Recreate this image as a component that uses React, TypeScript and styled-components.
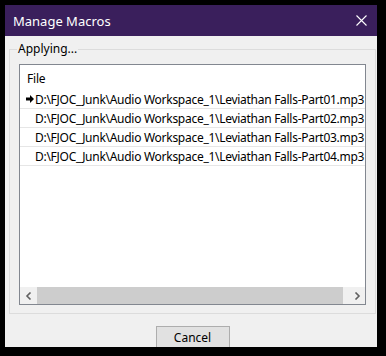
import React from "react";
import styled, { createGlobalStyle } from "styled-components";

const GlobalStyle = createGlobalStyle`
  html, body {
    margin: 0;
    padding: 0;
    background: #000000;
  }
  body {
    font-family: "Noto Sans", "DejaVu Sans", sans-serif;
    font-size: 12px;
  }
`;

const Screen = styled.div`
  width: 386px;
  height: 356px;
  padding: 5px 9px 9px 5px;
  box-sizing: border-box;
  overflow: hidden;
`;

const Dialog = styled.div`
  display: flex;
  flex-direction: column;
  width: 372px;
  height: 342px;
  background: #f0f0f0;
  overflow: hidden;
`;

const TitleBar = styled.div`
  display: flex;
  align-items: center;
  justify-content: space-between;
  height: 31px;
  padding: 0 6px 0 8px;
  background: #3a1f5c;
  color: #ffffff;
  font-size: 13px;
  flex-shrink: 0;
`;

const CloseButton = styled.div`
  display: flex;
  align-items: center;
  justify-content: center;
  width: 20px;
  height: 20px;
`;

const Body = styled.div`
  display: flex;
  flex-direction: column;
  padding: 13px 1px 0 4px;
  gap: 12px;
`;

const GroupBox = styled.div`
  display: flex;
  flex-direction: column;
  height: 265px;
  box-sizing: border-box;
  border: 1px solid #dcdcdc;
  padding: 0 9px 8px 9px;
`;

const GroupLabel = styled.div`
  align-self: flex-start;
  height: 14px;
  line-height: 14px;
  margin: -8px 0 0 -2px;
  padding: 0 1px;
  background: #f0f0f0;
  color: #000000;
`;

const ListBox = styled.div`
  display: flex;
  flex-direction: column;
  height: 242px;
  margin-top: 8px;
  border: 1px solid #828790;
  background: #ffffff;
  box-sizing: border-box;
`;

const ListBody = styled.div`
  flex: 1;
  overflow: hidden;
`;

const HeaderCell = styled.div`
  height: 25px;
  padding: 1px 0 0 7px;
  box-sizing: border-box;
  display: flex;
  align-items: center;
  color: #000000;
  white-space: nowrap;
  letter-spacing: -0.2px;
`;

const Row = styled.div`
  display: flex;
  align-items: center;
  height: 18px;
  border-bottom: 1px solid #e6e6e6;
  white-space: nowrap;
  color: #000000;
  letter-spacing: -0.28px;
`;

const Marker = styled.div`
  width: 15px;
  flex-shrink: 0;
  display: flex;
  align-items: center;
  justify-content: flex-end;
  padding-right: 1px;
  box-sizing: border-box;
`;

const ScrollBar = styled.div`
  display: flex;
  height: 17px;
  background: #f0f0f0;
  flex-shrink: 0;
`;

const ScrollArrow = styled.div`
  width: 17px;
  display: flex;
  align-items: center;
  justify-content: center;
`;

const Thumb = styled.div`
  flex: 1;
  background: #cdcdcd;
  margin-right: 5px;
`;

const Footer = styled.div`
  display: flex;
  justify-content: center;
`;

const Button = styled.div`
  width: 74px;
  height: 23px;
  box-sizing: border-box;
  border: 1px solid #adadad;
  background: #e1e1e1;
  display: flex;
  align-items: center;
  justify-content: center;
  color: #000000;
`;

const files = [
  "D:\\FJOC_Junk\\Audio Workspace_1\\Leviathan Falls-Part01.mp3",
  "D:\\FJOC_Junk\\Audio Workspace_1\\Leviathan Falls-Part02.mp3",
  "D:\\FJOC_Junk\\Audio Workspace_1\\Leviathan Falls-Part03.mp3",
  "D:\\FJOC_Junk\\Audio Workspace_1\\Leviathan Falls-Part04.mp3",
];

export default function App() {
  return (
    <Screen>
      <GlobalStyle />
      <Dialog>
        <TitleBar>
          <span>Manage Macros</span>
          <CloseButton>
            <svg width="11" height="11" viewBox="0 0 11 11">
              <path d="M0.5 0.5 L10.5 10.5 M10.5 0.5 L0.5 10.5" stroke="#ffffff" strokeWidth="1.1" />
            </svg>
          </CloseButton>
        </TitleBar>
        <Body>
          <GroupBox>
            <GroupLabel>Applying...</GroupLabel>
            <ListBox>
              <ListBody>
                <HeaderCell>File</HeaderCell>
                {files.map((f, i) => (
                  <Row key={f}>
                    <Marker>
                      {i === 0 && (
                        <svg width="8" height="8" viewBox="0 0 8 8">
                          <path d="M0 2.5 H4 V0 L8 4 L4 8 V5.5 H0 Z" fill="#000000" />
                        </svg>
                      )}
                    </Marker>
                    <span>{f}</span>
                  </Row>
                ))}
              </ListBody>
              <ScrollBar>
                <ScrollArrow>
                  <svg width="8" height="8" viewBox="0 0 8 8">
                    <path d="M5.5 0.5 L2 4 L5.5 7.5" stroke="#606060" strokeWidth="1.6" fill="none" />
                  </svg>
                </ScrollArrow>
                <Thumb />
                <ScrollArrow>
                  <svg width="8" height="8" viewBox="0 0 8 8">
                    <path d="M2.5 0.5 L6 4 L2.5 7.5" stroke="#606060" strokeWidth="1.6" fill="none" />
                  </svg>
                </ScrollArrow>
              </ScrollBar>
            </ListBox>
          </GroupBox>
          <Footer>
            <Button>Cancel</Button>
          </Footer>
        </Body>
      </Dialog>
    </Screen>
  );
}
